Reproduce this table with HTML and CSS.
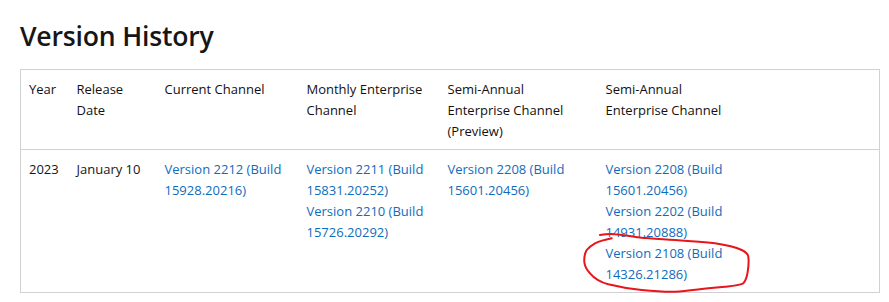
FILE: index.html
```html
<!DOCTYPE html>
<html lang="en">
<head>
<meta charset="utf-8">
<title>Version History</title>
<link rel="stylesheet" href="styles.css">
</head>
<body>
<main class="page">
  <h1 class="title">Version History</h1>
  <table class="history">
    <colgroup>
      <col class="c-year"><col class="c-date"><col class="c-cur"><col class="c-month"><col class="c-prev"><col class="c-semi"><col class="c-rest">
    </colgroup>
    <thead>
      <tr>
        <th>Year</th>
        <th>Release Date</th>
        <th>Current Channel</th>
        <th>Monthly Enterprise Channel</th>
        <th>Semi-Annual Enterprise Channel (Preview)</th>
        <th>Semi-Annual Enterprise Channel</th>
        <th></th>
      </tr>
    </thead>
    <tbody>
      <tr>
        <td>2023</td>
        <td>January 10</td>
        <td><a href="#">Version 2212 (Build 15928.20216)</a></td>
        <td><a href="#">Version 2211 (Build 15831.20252)</a><br><a href="#">Version 2210 (Build 15726.20292)</a></td>
        <td><a href="#">Version 2208 (Build 15601.20456)</a></td>
        <td class="marked"><a href="#">Version 2208 (Build 15601.20456)</a><br><a href="#">Version 2202 (Build 14931.20888)</a><br><a href="#">Version 2108 (Build 14326.21286)</a></td>
        <td></td>
      </tr>
    </tbody>
  </table>
  <svg class="scribble" width="180" height="70" viewBox="578 230 180 70" aria-hidden="true">
    <path d="M600 235 C606 234 612 234 615 234.3 C625 235 634 237 641.7 237.7 C652 238.5 664 239.5 675 240 C690 241 704 242 715 243.3 C726 245 735 247 741.7 250 C746 252 748 254 748.3 256.7 C749 262 748.5 267 747.7 271.7 C747 277 745.5 281 743.3 283.3 C738 285.5 731 286 725 286.7 C719 287.3 713 287.8 708.3 288.3 C697 289.5 686 291.3 675 291.7 C664 292 652 291 641.7 290 C630 289 619 287 608.3 284.3 C600 282 594 278 590 273.3 C586 269 584.5 265 584.3 261.7 C584 257 585 253 586.7 250 C589 247 592 245 595 243.3 C600 241 606 239.5 611.7 238.3" fill="none" stroke="#e8151b" stroke-width="2" stroke-linecap="round" stroke-linejoin="round"/>
  </svg>
</main>
</body>
</html>
```
FILE: styles.css
```css
html, body {
  margin: 0;
  padding: 0;
  background: #ffffff;
}
.page {
  position: relative;
  padding: 0 20px;
  font-family: "Open Sans", "Noto Sans", sans-serif;
  color: #161616;
}
.title {
  margin: 0;
  padding-top: 17px;
  padding-bottom: 14px;
  font-size: 26.6px;
  line-height: 38px;
  font-weight: 600;
  letter-spacing: -0.2px;
}
.history {
  width: 860px;
  border-collapse: collapse;
  table-layout: fixed;
  border: 1px solid #d1d1d1;
  font-size: 13px;
  line-height: 21px;
}
.c-year { width: 48px; }
.c-date { width: 88px; }
.c-cur { width: 142px; }
.c-month { width: 141px; }
.c-prev { width: 158px; }
.c-semi { width: 142px; }
.history th,
.history td {
  padding: 9px 8px 7px;
  text-align: left;
  vertical-align: top;
}
.history th {
  font-weight: 500;
  color: #111111;
  border-bottom: 1px solid #d1d1d1;
}
.history td {
  border-bottom: 1px solid #d1d1d1;
}
.history a {
  color: #0f6cbd;
  text-decoration: none;
}
.scribble {
  position: absolute;
  left: 578px;
  top: 230px;
  pointer-events: none;
}
```
